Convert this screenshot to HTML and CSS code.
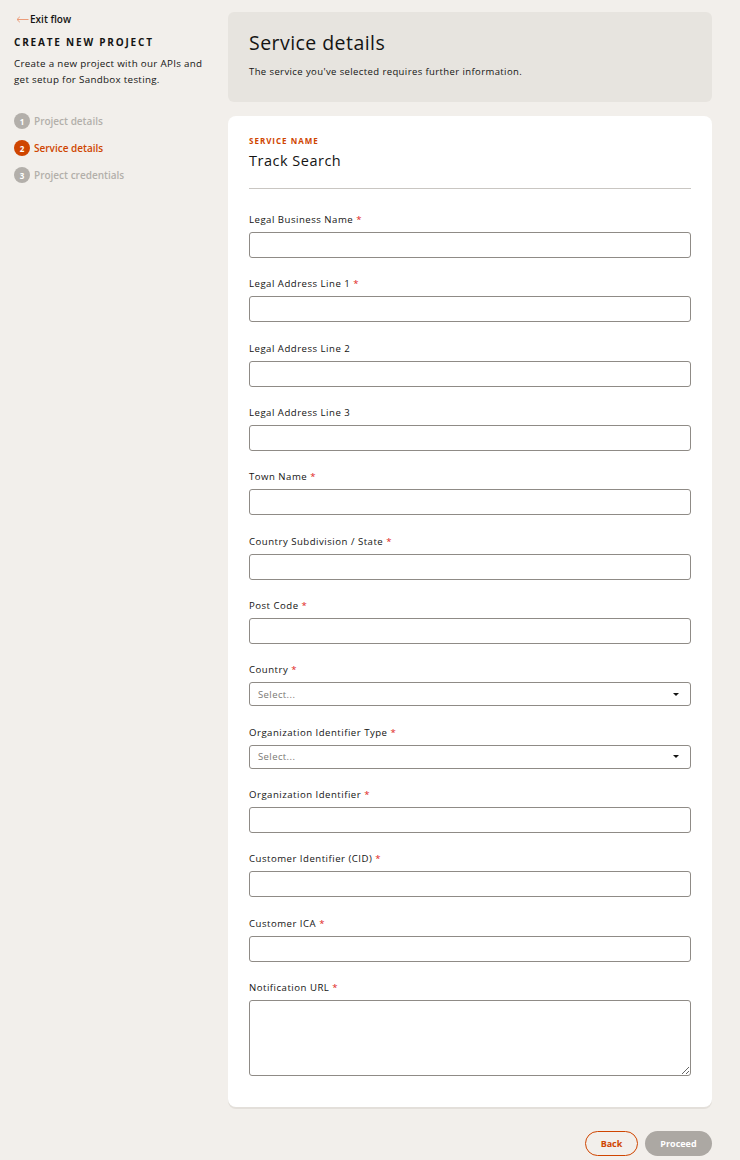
FILE: index.html
```html
<!DOCTYPE html>
<html>
<head>
<meta charset="utf-8">
<link rel="stylesheet" href="styles.css">
</head>
<body>
<div class="page">
  <aside class="side">
    <a class="exit"><svg class="arrow" width="13" height="7" viewBox="0 0 13 7"><path d="M12.5 3.5H1M3.8 0.8L1 3.5l2.8 2.7" fill="none" stroke="#eb9b78" stroke-width="1"/></svg>Exit flow</a>
    <h1 class="side-title">CREATE NEW PROJECT</h1>
    <p class="side-desc">Create a new project with our APIs and get setup for Sandbox testing.</p>
    <ol class="steps">
      <li class="step"><span class="num">1</span>Project details</li>
      <li class="step active"><span class="num">2</span>Service details</li>
      <li class="step"><span class="num">3</span>Project credentials</li>
    </ol>
  </aside>
  <main class="main">
    <section class="header">
      <h2 class="header-title">Service details</h2>
      <p class="header-sub">The service you've selected requires further information.</p>
    </section>
    <section class="card">
      <div class="eyebrow">SERVICE NAME</div>
      <div class="service">Track Search</div>
      <hr class="divider">
      <div class="fields">
        <div class="field"><label>Legal Business Name <span class="req">*</span></label><input class="input" type="text"></div>
        <div class="field"><label>Legal Address Line 1 <span class="req">*</span></label><input class="input" type="text"></div>
        <div class="field"><label>Legal Address Line 2</label><input class="input" type="text"></div>
        <div class="field"><label>Legal Address Line 3</label><input class="input" type="text"></div>
        <div class="field"><label>Town Name <span class="req">*</span></label><input class="input" type="text"></div>
        <div class="field"><label>Country Subdivision / State <span class="req">*</span></label><input class="input" type="text"></div>
        <div class="field"><label>Post Code <span class="req">*</span></label><input class="input" type="text"></div>
        <div class="field"><label>Country <span class="req">*</span></label><div class="select"><span>Select...</span><span class="caret"></span></div></div>
        <div class="field"><label>Organization Identifier Type <span class="req">*</span></label><div class="select"><span>Select...</span><span class="caret"></span></div></div>
        <div class="field"><label>Organization Identifier <span class="req">*</span></label><input class="input" type="text"></div>
        <div class="field"><label>Customer Identifier (CID) <span class="req">*</span></label><input class="input" type="text"></div>
        <div class="field"><label>Customer ICA <span class="req">*</span></label><input class="input" type="text"></div>
        <div class="field"><label>Notification URL <span class="req">*</span></label><textarea class="textarea"></textarea></div>
      </div>
    </section>
    <div class="actions">
      <button class="btn back">Back</button>
      <button class="btn proceed">Proceed</button>
    </div>
  </main>
</div>
</body>
</html>
```

FILE: styles.css
```css
* { box-sizing: border-box; }
html, body { margin: 0; padding: 0; }
body {
  background: #f2efeb;
  font-family: "Open Sans", "Liberation Sans", sans-serif;
  color: #141413;
  width: 740px;
  height: 1160px;
  overflow: hidden;
}
.page {
  display: flex;
  gap: 14px;
  padding: 12px 28px 0 14px;
}
.side {
  width: 200px;
  flex: none;
}
.exit {
  display: flex;
  align-items: center;
  font-size: 10px;
  font-weight: 600;
  color: #141413;
  height: 14px;
}
.arrow {
  margin-left: 2px;
  margin-right: 1px;
  margin-top: 1px;
}
.side-title {
  margin: 9px 0 0;
  font-size: 10px;
  font-weight: 700;
  letter-spacing: 1.8px;
  line-height: 14px;
}
.side-desc {
  margin: 7px 0 0;
  font-size: 9.8px;
  line-height: 16px;
  letter-spacing: 0.3px;
}
.steps {
  list-style: none;
  margin: 24px 0 0;
  padding: 0;
  display: flex;
  flex-direction: column;
  gap: 9px;
}
.step {
  display: flex;
  align-items: center;
  gap: 4px;
  font-size: 10px;
  font-weight: 600;
  color: #b3afaa;
  height: 18px;
}
.num {
  width: 16px;
  height: 16px;
  border-radius: 50%;
  background: #b3afaa;
  color: #fff;
  font-size: 8px;
  font-weight: 700;
  display: flex;
  align-items: center;
  justify-content: center;
}
.step.active { color: #cf4500; }
.step.active .num { background: #cf4500; }
.main {
  width: 484px;
  flex: none;
}
.header {
  background: #e7e4df;
  border-radius: 6px;
  padding: 17px 21px 20px;
  height: 90px;
}
.header-title {
  margin: 0;
  font-size: 19.5px;
  font-weight: 400;
  line-height: 28px;
  letter-spacing: 0.45px;
}
.header-sub {
  margin: 9px 0 0;
  font-size: 9.5px;
  line-height: 12px;
  letter-spacing: 0.4px;
}
.card {
  margin-top: 14px;
  background: #fff;
  border-radius: 8px;
  box-shadow: 0 2px 0 #e3dfda;
  padding: 20px 21px 31px;
}
.eyebrow {
  font-size: 8px;
  font-weight: 700;
  letter-spacing: 1px;
  color: #cf4500;
  line-height: 10px;
}
.service {
  margin-top: 5px;
  font-size: 14.5px;
  line-height: 20px;
  letter-spacing: 0.5px;
}
.divider {
  border: 0;
  border-top: 1px solid #c9c6c2;
  margin: 17px 0 0;
}
.fields {
  margin-top: 25px;
  display: flex;
  flex-direction: column;
  gap: 20.33px;
}
.field {
  display: flex;
  flex-direction: column;
  gap: 6px;
}
.field label {
  font-size: 9.6px;
  line-height: 12px;
  color: #141413;
  letter-spacing: 0.5px;
}
.req { color: #e0251b; }
.input, .select, .textarea {
  width: 100%;
  border: 1px solid #8f8b86;
  border-radius: 3px;
  background: #fff;
  font: inherit;
}
.input { height: 26px; padding: 0 8px; }
.select {
  height: 24px;
  padding: 0 9px 0 8px;
  display: flex;
  align-items: center;
  justify-content: space-between;
  font-size: 9.5px;
  letter-spacing: 0.4px;
  color: #7a7773;
}
.caret {
  width: 0;
  height: 0;
  border-left: 3px solid transparent;
  border-right: 3px solid transparent;
  border-top: 3px solid #141413;
  margin-right: 2px;
}
.textarea {
  height: 76px;
  display: block;
  resize: vertical;
}
.actions {
  display: flex;
  justify-content: flex-end;
  gap: 7px;
  margin-top: 24px;
}
.btn {
  height: 25px;
  border-radius: 13px;
  font-family: inherit;
  font-size: 9px;
  font-weight: 700;
  padding: 0;
}
.back {
  width: 53px;
  background: transparent;
  border: 1px solid #cf4500;
  color: #cf4500;
}
.proceed {
  width: 67px;
  background: #aca8a3;
  border: 0;
  color: #fff;
}
```
